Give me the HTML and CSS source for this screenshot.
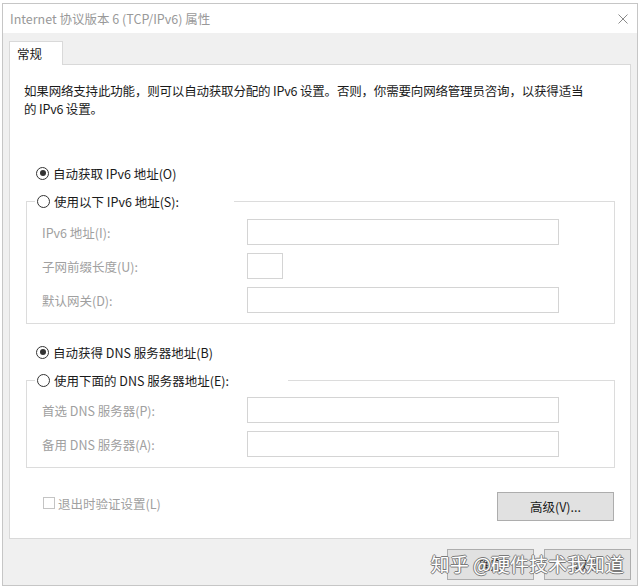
FILE: index.html
```html
<!DOCTYPE html>
<html>
<head>
  <meta charset="UTF-8">
  <title>Internet 协议版本 6 (TCP/IPv6) 属性</title>
  <link rel="stylesheet" href="styles.css">
</head>
<body>
  <div class="window">
    <div class="titlebar">
      <span class="title">Internet 协议版本 6 (TCP/IPv6) 属性</span>
      <svg class="close" width="10" height="10" viewBox="0 0 10 10">
        <path d="M0.5 0.5L9.5 9.5M9.5 0.5L0.5 9.5" stroke="#8a8a8a" stroke-width="1" fill="none"></path>
      </svg>
    </div>

    <div class="dialog">
      <div class="tabs">
        <div class="tab">常规</div>
      </div>

      <div class="panel">
        <p class="desc">如果网络支持此功能，则可以自动获取分配的 IPv6 设置。否则，你需要向网络管理员咨询，以获得适当<br>的 IPv6 设置。</p>

        <label class="radio-row">
          <span class="radio checked"></span>
          <span>自动获取 IPv6 地址(O)</span>
        </label>

        <fieldset class="group">
          <legend class="legend legend-ip">
            <span class="radio-row">
              <span class="radio"></span>
              <span>使用以下 IPv6 地址(S):</span>
            </span>
          </legend>
          <div class="field">
            <span class="field-label">IPv6 地址(I):</span>
            <input class="box" type="text" disabled>
          </div>
          <div class="field">
            <span class="field-label">子网前缀长度(U):</span>
            <input class="box box-small" type="text" disabled>
          </div>
          <div class="field">
            <span class="field-label">默认网关(D):</span>
            <input class="box" type="text" disabled>
          </div>
        </fieldset>

        <label class="radio-row radio-dns">
          <span class="radio checked"></span>
          <span>自动获得 DNS 服务器地址(B)</span>
        </label>

        <fieldset class="group group-dns">
          <legend class="legend legend-dns">
            <span class="radio-row">
              <span class="radio"></span>
              <span>使用下面的 DNS 服务器地址(E):</span>
            </span>
          </legend>
          <div class="field">
            <span class="field-label">首选 DNS 服务器(P):</span>
            <input class="box" type="text" disabled>
          </div>
          <div class="field">
            <span class="field-label">备用 DNS 服务器(A):</span>
            <input class="box" type="text" disabled>
          </div>
        </fieldset>

        <div class="panel-footer">
          <label class="check-row">
            <span class="checkbox"></span>
            <span>退出时验证设置(L)</span>
          </label>
          <button class="btn btn-advanced">高级(V)...</button>
        </div>
      </div>

      <div class="actions">
        <button class="btn btn-action">确定</button>
        <button class="btn btn-action">取消</button>
        <div class="watermark">知乎 @硬件技术我知道</div>
      </div>
    </div>
  </div>
</body>
</html>
```

FILE: styles.css
```css
body {
  margin: 0;
  background: #fff;
  font-family: "Noto Sans CJK SC", "Noto Sans", sans-serif;
  font-size: 12.5px;
  color: #1a1a1a;
}
.window {
  margin: 3px 0 0 2px;
  width: 636px;
  border: 1px solid #c6c6c6;
  box-sizing: border-box;
}
.titlebar {
  height: 29px;
  background: #fff;
  display: flex;
  justify-content: space-between;
  align-items: center;
  padding: 0 9px 0 7px;
}
.title {
  color: #999;
}
.dialog {
  background: #f0f0f0;
  padding: 8px 6px 5px 6px;
}
.tabs {
  display: flex;
}
.tab {
  width: 54px;
  height: 24px;
  box-sizing: border-box;
  background: #fff;
  border: 1px solid #d9d9d9;
  border-bottom: none;
  padding-left: 7px;
  line-height: 23px;
  position: relative;
  z-index: 1;
}
.panel {
  margin-top: -1px;
  background: #fff;
  border: 1px solid #d9d9d9;
  padding-bottom: 17px;
}
.desc {
  margin: 17px 0 0 14px;
  line-height: 18px;
  letter-spacing: -0.18px;
}
.radio-row {
  display: flex;
  align-items: center;
  height: 20px;
  margin: 45px 0 0 26px;
}
.radio-dns {
  margin-top: 18px;
}
.legend .radio-row {
  margin: 0;
}
.radio {
  width: 13px;
  height: 13px;
  box-sizing: border-box;
  border: 1px solid #333;
  border-radius: 50%;
  margin-right: 4px;
  display: flex;
  align-items: center;
  justify-content: center;
}
.radio.checked::after {
  content: "";
  width: 6px;
  height: 6px;
  border-radius: 50%;
  background: #333;
}
.group {
  margin: 8px 15px 0 16px;
  padding: 8px 0 10px 0;
  border: 1px solid #dcdcdc;
}
.group-dns {
  padding-top: 7px;
}
.legend {
  margin-left: 8px;
  padding: 0 0 0 2px;
  height: 20px;
  box-sizing: border-box;
}
.legend-ip {
  width: 199px;
}
.legend-dns {
  width: 253px;
}
.field {
  display: flex;
  align-items: center;
  padding-left: 15px;
  margin-bottom: 8px;
}
.field:last-child {
  margin-bottom: 0;
}
.field-label {
  width: 205px;
  color: #a0a0a0;
}
.box {
  width: 312px;
  height: 26px;
  box-sizing: border-box;
  border: 1px solid #d4d4d4;
  background: #fff;
  margin: 0;
}
.box-small {
  width: 36px;
}
.panel-footer {
  display: flex;
  justify-content: space-between;
  align-items: flex-start;
  margin: 24px 16px 0 33px;
}
.check-row {
  display: flex;
  align-items: center;
  height: 20px;
  margin-top: 1px;
  color: #a0a0a0;
}
.checkbox {
  width: 12px;
  height: 12px;
  box-sizing: border-box;
  border: 1px solid #c4c4c4;
  margin-right: 3px;
}
.btn {
  font-family: inherit;
  font-size: 12.5px;
  color: #1a1a1a;
  background: #e1e1e1;
  border: 1px solid #adadad;
  padding: 0;
}
.btn-advanced {
  width: 117px;
  height: 29px;
}
.actions {
  position: relative;
  display: flex;
  justify-content: flex-end;
  gap: 10px;
  margin-top: 10px;
}
.btn-action {
  width: 87px;
  height: 31px;
}
.watermark {
  position: absolute;
  right: 7px;
  top: 1px;
  font-size: 19px;
  line-height: 28px;
  color: #fff;
  text-shadow: 1px 0 #7a7a7a, -1px 0 #7a7a7a, 0 1px #7a7a7a, 0 -1px #7a7a7a;
  white-space: nowrap;
}
```
